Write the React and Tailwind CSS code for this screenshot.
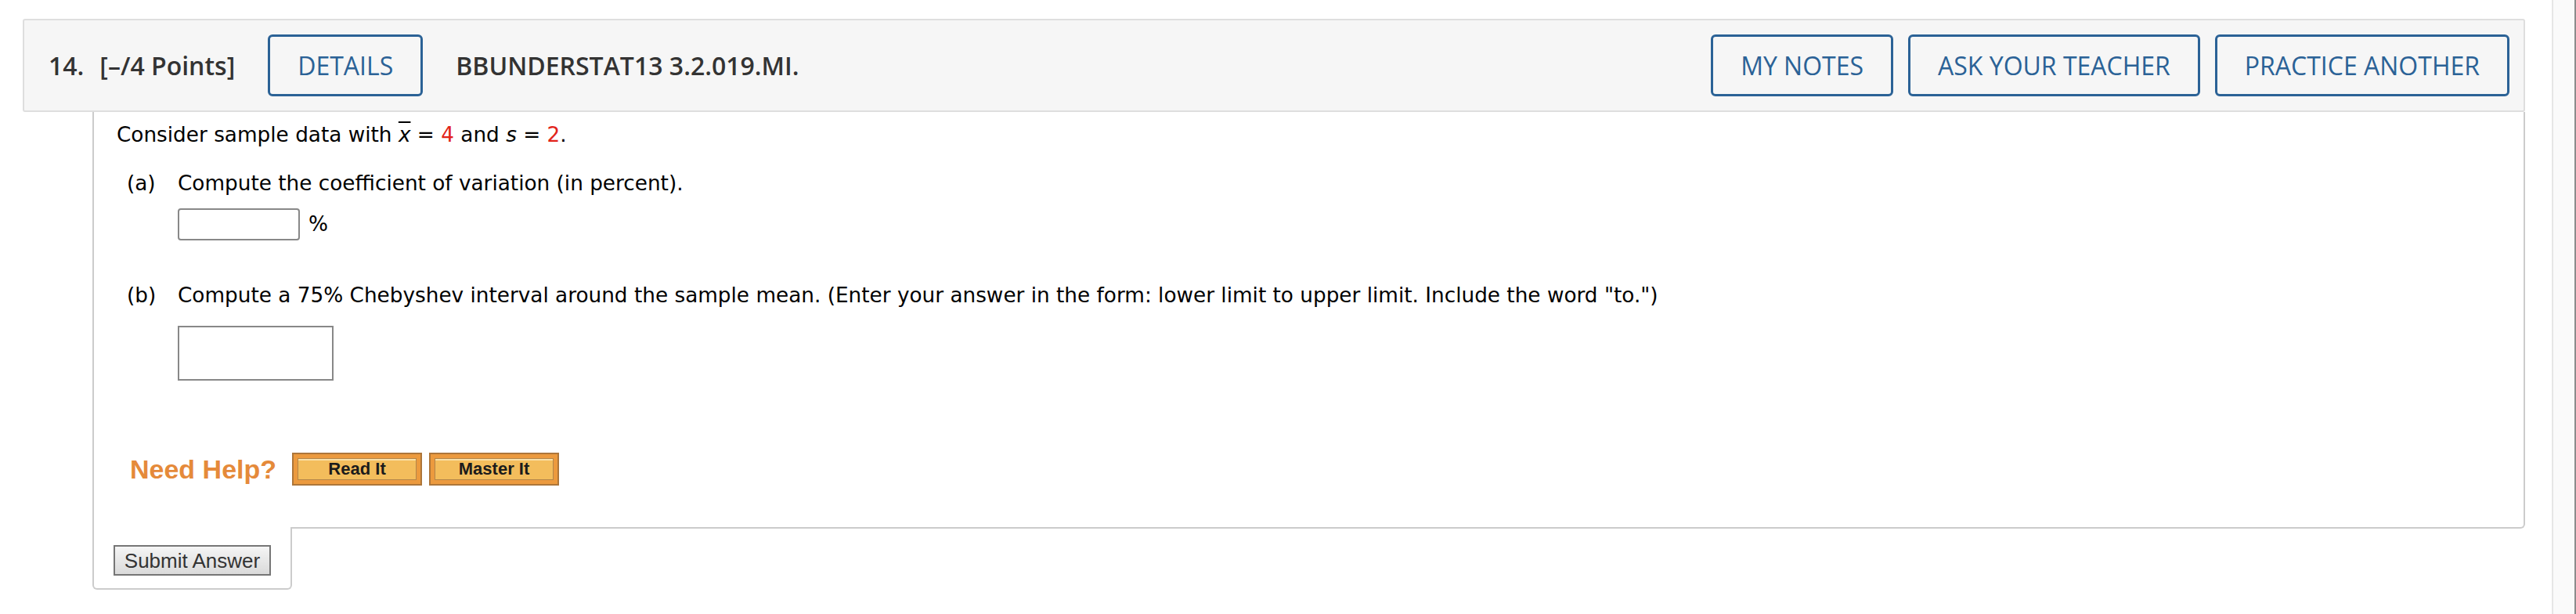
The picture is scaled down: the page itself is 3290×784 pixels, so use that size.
import React from 'react';

const blueBtn = "flex items-center h-[79px] px-[35px] border-[3px] border-[#2b6296] rounded-[6px] text-[#2b6296] text-[32px] font-normal bg-[#f6f6f6]";

function Header() {
    return (
        <div className="flex items-center justify-between h-[119px] border-2 border-[#dedede] rounded-[3px] bg-[#f6f6f6] pl-[31px] pr-[18px] text-[#333333] text-[32px] font-['Open_Sans',sans-serif]">
            <div className="flex items-center">
                <span className="font-semibold">14.</span>
                <span className="font-semibold ml-[20px]">[–/4 Points]</span>
                <button className={blueBtn + " ml-[42px]"}>DETAILS</button>
                <span className="font-semibold ml-[42px]">BBUNDERSTAT13 3.2.019.MI.</span>
            </div>
            <div className="flex items-center gap-[19px]">
                <button className={blueBtn}>MY NOTES</button>
                <button className={blueBtn}>ASK YOUR TEACHER</button>
                <button className={blueBtn}>PRACTICE ANOTHER</button>
            </div>
        </div>
    )
}

function HelpButton({ label }) {
    return (
        <div className="flex h-[42px] w-[166px] border-2 border-[#ad763a] bg-[#ec9a3e] p-[5px]">
            <div className="flex-1 flex items-center justify-center border border-[#b3864a] bg-[#f3bd5c] shadow-[inset_0_2px_0_#fbe0a8] font-bold text-[22px] text-[#1b1b1b] leading-none">
                {label}
            </div>
        </div>
    )
}

function Question() {
    return (
        <div className="ml-[89px] font-['DejaVu_Sans',sans-serif] text-[26.3px] leading-[39px] text-black">
            <div className="border-l-2 border-r-2 border-b-2 border-[#cccccc] rounded-br-[6px] pt-[10px] pl-[29px] pb-[53px]">
                <p>
                    Consider sample data with <span className="italic overline decoration-2">x</span> = <span className="text-[#e2231a]">4</span> and <span className="italic">s</span> = <span className="text-[#e2231a]">2</span>.
                </p>
                <div className="pl-[13px]">
                    <div className="flex mt-[23px]">
                        <span className="w-[65px]">(a)</span>
                        <span>Compute the coefficient of variation (in percent).</span>
                    </div>
                    <div className="flex items-center ml-[65px] mt-[12px]">
                        <input type="text" className="w-[156px] h-[41px] border-2 border-[#888888] rounded-[4px] bg-white" />
                        <span className="ml-[11px]">%</span>
                    </div>
                    <div className="flex mt-[51px]">
                        <span className="w-[65px]">(b)</span>
                        <span>Compute a 75% Chebyshev interval around the sample mean. (Enter your answer in the form: lower limit to upper limit. Include the word "to.")</span>
                    </div>
                    <div className="ml-[65px] mt-[19px]">
                        <input type="text" className="block w-[199px] h-[70px] border-2 border-[#888888] bg-white" />
                    </div>
                </div>
                <div className="flex items-center h-[42px] mt-[92px] ml-[17px] font-['Liberation_Sans',Arial,sans-serif]">
                    <span className="font-bold text-[34px] leading-[42px] text-[#e58a3a]">Need Help?</span>
                    <div className="flex gap-[9px] ml-[20px]">
                        <HelpButton label="Read It" />
                        <HelpButton label="Master It" />
                    </div>
                </div>
            </div>
            <div className="relative -mt-[2px] w-[255px] bg-white border-l-2 border-r-2 border-b-2 border-[#cccccc] rounded-b-[6px] pt-[23px] pb-[15px] pl-[25px]">
                <button className="w-[201px] h-[39px] border-2 border-[#767676] bg-linear-to-b from-[#f5f5f5] to-[#dadada] text-[26px] leading-none text-[#333333] font-['Liberation_Sans',Arial,sans-serif]">
                    Submit Answer
                </button>
            </div>
        </div>
    )
}

export default function App() {
    return (
        <div className="flex w-[3290px] h-[784px] bg-white overflow-hidden">
            <div className="flex-1 pt-[24px] pl-[29px] pr-[34px]">
                <Header />
                <Question />
            </div>
            <div className="w-[31px] h-full bg-[#fafafa] border-l-2 border-[#e6e6e6] border-r-2 border-r-[#8c8c8c]"></div>
        </div>
    )
}
